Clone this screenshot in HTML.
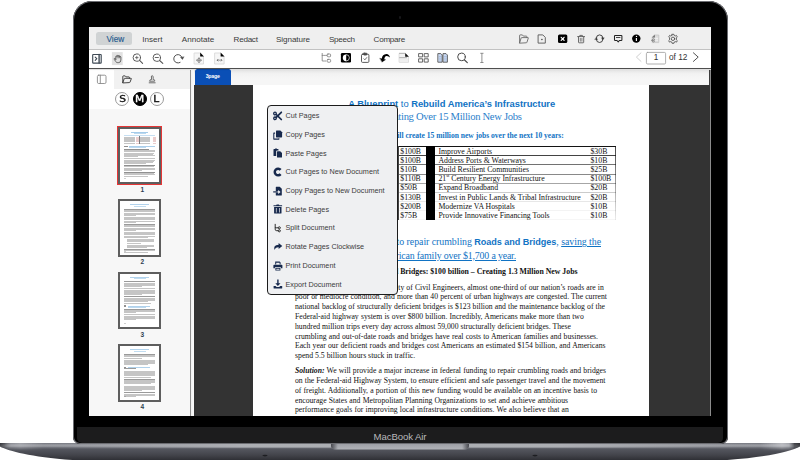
<!DOCTYPE html>
<html lang="en">
<head>
<meta charset="utf-8">
<title>PDF Viewer on MacBook Air</title>
<style>
*{box-sizing:border-box;margin:0;padding:0}
html,body{width:800px;height:460px;overflow:hidden;background:#fff}
body{position:relative;font-family:"Liberation Sans",sans-serif;color:#333}
.abs{position:absolute}
/* device */
#lid{position:absolute;left:72.6px;top:0.6px;width:655.2px;height:443px;background:#000;border-radius:19px 19px 7px 7px;box-shadow:inset 0 0 0 1px #6c6d72}
#chin{position:absolute;left:76.6px;top:427.2px;width:646.8px;height:16px;background:#1c1c1d;border-radius:0 0 5px 5px}
#brand{position:absolute;left:300px;width:200px;top:431.2px;text-align:center;font-size:9.6px;line-height:12px;color:#b9b9bc;letter-spacing:-0.08px}
#base{position:absolute;left:0;top:0}
#screen{position:absolute;left:89px;top:27px;width:622px;height:388.8px;background:#fff;overflow:hidden}
/* app */
#menubar{position:absolute;left:0;top:0;width:622px;height:22px;background:#efefef}
#menuline{position:absolute;left:0;top:21.8px;width:622px;height:1.5px;background:linear-gradient(#d6d6d6,#c2c2c2 50%,#d0d0d0)}
#toolbar{position:absolute;left:0;top:23.3px;width:622px;height:17.9px;background:#fff}
#toolline{position:absolute;left:0;top:41px;width:622px;height:1.25px;background:#4e4e4e;box-shadow:0 0.6px 0.8px rgba(0,0,0,.25);z-index:4}
.mi{position:absolute;top:6.5px;font-size:8.1px;line-height:11px;color:#3a3a3a;white-space:nowrap}
#viewbtn{position:absolute;left:7px;top:5px;width:36px;height:12.6px;border-radius:2.5px;background:#d0d3d4}
/* sidebar */
#sidebar{position:absolute;left:0;top:42.6px;width:100.5px;height:347px;background:#f7f7f7}
#sbtabs{position:absolute;left:0;top:0;width:100.5px;height:19.6px;background:#f1f1f1}
#sbtab1{position:absolute;left:0;top:0;width:25.4px;height:19.6px;background:#fff}
#sml{position:absolute;left:0;top:19.6px;width:100.5px;height:20.1px;background:#fff}
.circ{position:absolute;top:2.4px;width:14px;height:14px;border-radius:50%;border:0.8px solid #9a9a9a;background:#fff;color:#111;font-family:"DejaVu Sans","Liberation Sans",sans-serif;font-weight:bold;font-size:8.2px;line-height:12.8px;text-align:center}
.circ b{display:inline-block;transform:scaleX(1.3);font-weight:normal;-webkit-text-stroke:0.3px currentColor}
.circ.on{background:#000;border-color:#000;color:#fff}
.thumb{position:absolute;left:29.5px;width:42.6px;height:57.2px;background:#fff;border:2px solid #5e5e5e}
.thumb.sel{outline:1.6px solid #e63636}
.tl{position:absolute;width:43px;left:29.5px;text-align:center;font-size:6.5px;line-height:8px;color:#2d3e50;font-weight:bold}
#divider{position:absolute;left:100.8px;top:42.6px;width:4px;height:347px;background:linear-gradient(90deg,#8e8e8e 0,#8e8e8e 24%,#f2f2f2 24%,#fafafa 100%)}
/* viewer */
#viewer{position:absolute;left:104.8px;top:42.6px;width:517.2px;height:347px;background:#333}
#tabbar{position:absolute;left:0;top:0;width:517.2px;height:15px;background:linear-gradient(#e4e4e4,#f2f2f2 25%,#f6f6f6 60%,#f6f6f6)}
#doctab{position:absolute;left:1px;top:-0.5px;width:35.8px;height:15.5px;background:#0a4fb6;border-radius:2.5px 2.5px 0 0;color:#fff;font-size:5.2px;font-weight:bold;line-height:15px;text-align:center;letter-spacing:-0.2px}
#page{position:absolute;left:59px;top:15px;width:396.5px;height:332px;background:#fff;overflow:hidden;font-family:"Liberation Serif",serif;color:#111}
#vscroll{position:absolute;right:0.6px;top:0;width:1.6px;height:15px;background:#3c3c3c}
#redge{position:absolute;right:0;top:0;width:0.7px;height:347px;background:#8c8c8c}
.ln{position:absolute;white-space:nowrap}
.ln.bl{color:#1173c4}
.ln.tt{color:#1173c4;font-family:"Liberation Sans",sans-serif}
.ln.tb{color:#111}
.ln sup{font-size:60%;line-height:0;vertical-align:super}
.ln .gs{font-family:"Liberation Sans",sans-serif;font-size:92%}
.thumb i{position:absolute;display:block}
/* context menu */
#ctx{position:absolute;z-index:10;left:178.3px;top:78.3px;width:131px;height:189.3px;background:#eff0f2;border:1.35px solid #1c1c1c;border-radius:4px}
.ci{position:absolute;left:0;width:128px;height:18.72px}
.ci span{position:absolute;left:17.2px;top:5.1px;font-size:7.25px;line-height:10px;color:#3c3c3c;white-space:nowrap}
.ci svg{position:absolute;left:5.1px;top:4.8px;width:10px;height:10px;overflow:visible}
</style>
</head>
<body>
<!-- laptop base -->
<svg id="base" width="800" height="460" viewBox="0 0 800 460">
  <defs>
    <linearGradient id="bg1" x1="0" y1="0" x2="0" y2="1">
      <stop offset="0" stop-color="#70727a"/>
      <stop offset="0.07" stop-color="#8c8e95"/>
      <stop offset="0.16" stop-color="#9b9da3"/>
      <stop offset="0.25" stop-color="#6c6e76"/>
      <stop offset="0.34" stop-color="#54565e"/>
      <stop offset="0.67" stop-color="#43444b"/>
      <stop offset="1" stop-color="#2b2c31"/>
    </linearGradient>
    <linearGradient id="bg2" x1="0" y1="0" x2="0" y2="1">
      <stop offset="0" stop-color="#989aa0"/>
      <stop offset="0.45" stop-color="#a5a7ad"/>
      <stop offset="1" stop-color="#b0b2b7"/>
    </linearGradient>
    <linearGradient id="bg3" x1="0" y1="0" x2="1" y2="0">
      <stop offset="0" stop-color="#adafb4" stop-opacity="0"/>
      <stop offset="0.08" stop-color="#adafb4" stop-opacity="0.1"/>
      <stop offset="0.3" stop-color="#adafb4" stop-opacity="0.95"/>
      <stop offset="0.7" stop-color="#adafb4" stop-opacity="0.95"/>
      <stop offset="0.92" stop-color="#adafb4" stop-opacity="0.1"/>
      <stop offset="1" stop-color="#adafb4" stop-opacity="0"/>
    </linearGradient>
    <linearGradient id="bg4" x1="0" y1="0" x2="1" y2="0">
      <stop offset="0" stop-color="#3c3d43" stop-opacity="0.9"/>
      <stop offset="0.05" stop-color="#3c3d43" stop-opacity="0"/>
      <stop offset="0.95" stop-color="#3c3d43" stop-opacity="0"/>
      <stop offset="1" stop-color="#3c3d43" stop-opacity="0.9"/>
    </linearGradient>
    <clipPath id="bclip"><path d="M0 443.1 L800 443.1 L800 446.5 C790 451.5 768 457.5 720 460.5 L720 461 L80 461 L80 460.5 C32 457.5 10 451.5 0 446.5 Z"/></clipPath>
    <linearGradient id="tipR" x1="0" y1="0" x2="1" y2="0">
      <stop offset="0" stop-color="#d4d5d9" stop-opacity="0"/>
      <stop offset="0.55" stop-color="#d4d5d9" stop-opacity="0.75"/>
      <stop offset="0.72" stop-color="#d4d5d9" stop-opacity="0.5"/>
      <stop offset="0.86" stop-color="#26272b" stop-opacity="0.7"/>
      <stop offset="1" stop-color="#26272b" stop-opacity="0.95"/>
    </linearGradient>
    <linearGradient id="tipL" x1="1" y1="0" x2="0" y2="0">
      <stop offset="0" stop-color="#c4c5ca" stop-opacity="0"/>
      <stop offset="0.55" stop-color="#c4c5ca" stop-opacity="0.55"/>
      <stop offset="0.75" stop-color="#c4c5ca" stop-opacity="0.3"/>
      <stop offset="0.9" stop-color="#26272b" stop-opacity="0.5"/>
      <stop offset="1" stop-color="#26272b" stop-opacity="0.9"/>
    </linearGradient>
    <linearGradient id="tipV" x1="0" y1="0" x2="0" y2="1">
      <stop offset="0" stop-color="#fff" stop-opacity="1"/>
      <stop offset="0.45" stop-color="#fff" stop-opacity="0.8"/>
      <stop offset="1" stop-color="#fff" stop-opacity="0"/>
    </linearGradient>
    <mask id="tipM"><rect x="0" y="442" width="800" height="9" fill="url(#tipV)"/></mask>
  </defs>
  <path d="M0 443.1 L800 443.1 L800 446.5 C790 451.5 768 457.5 720 460.5 L720 461 L80 461 L80 460.5 C32 457.5 10 451.5 0 446.5 Z" fill="url(#bg1)"/>
  <rect x="0" y="443.1" width="800" height="4.5" fill="url(#bg3)"/>
  <g clip-path="url(#bclip)" mask="url(#tipM)"><rect x="760" y="442" width="40" height="10" fill="url(#tipR)"/><rect x="0" y="442" width="44" height="10" fill="url(#tipL)"/></g>
  <ellipse cx="265" cy="455.6" rx="2.6" ry="0.8" fill="#1d1e22"/><ellipse cx="535" cy="455.6" rx="2.6" ry="0.8" fill="#1d1e22"/>
  <path d="M331 443.1 L469 443.1 L469 446 Q469 449.5 464 449.5 L336 449.5 Q331 449.5 331 446 Z" fill="url(#bg2)"/>
  <path d="M331 443.1 L469 443.1 L469 446 Q469 449.5 464 449.5 L336 449.5 Q331 449.5 331 446 Z" fill="url(#bg4)"/>
</svg>
<div id="lid"></div>
<div id="chin"></div>
<div class="abs" style="left:398.6px;top:16.2px;width:2.8px;height:2.8px;border-radius:50%;background:#17171a"></div>
<div id="brand">MacBook Air</div>

<div id="screen">
  <div id="menubar">
    <div id="viewbtn"></div>
    <div class="mi" style="left:17.5px;color:#275a8f;font-size:8.25px;-webkit-text-stroke:0.15px #275a8f">View</div>
    <div class="mi" style="left:53.3px">Insert</div>
    <div class="mi" style="left:92.8px">Annotate</div>
    <div class="mi" style="left:144.6px;letter-spacing:-0.27px">Redact</div>
    <div class="mi" style="left:187px;letter-spacing:-0.08px">Signature</div>
    <div class="mi" style="left:240px;letter-spacing:-0.28px">Speech</div>
    <div class="mi" style="left:284.6px;letter-spacing:-0.27px">Compare</div>
  </div>
  <div id="menuline"></div>
  <div id="toolbar"></div>
<svg class="abs" style="left:0;top:0;overflow:visible;z-index:5" width="622" height="70" viewBox="89 27 622 70" fill="none" stroke-linecap="round" stroke-linejoin="round">
  <!-- ===== toolbar (row 2) left ===== -->
  <!-- panel toggle -->
  <g stroke="#3f4a55" stroke-width="1.15">
    <rect x="92.7" y="54.5" width="8.5" height="8.6" rx="0.6"/>
    <path d="M99.1 54.5V63.1" stroke-width="1.4"/>
    <path d="M95.2 57.1L96.8 58.7L95.2 60.3" stroke-width="1.1"/>
  </g>
  <!-- hand -->
  <rect x="111.9" y="52.1" width="10.8" height="13" fill="#e1e1e1" stroke="none"/>
  <path d="M115.8 59.4V56.5Q115.8 55.9 116.45 55.9Q117.1 55.9 117.1 56.5V56Q117.1 55.4 117.75 55.4Q118.4 55.4 118.4 56V56.2Q118.4 55.6 119.05 55.6Q119.7 55.6 119.7 56.2V57.2Q119.7 56.6 120.3 56.6Q120.9 56.6 120.9 57.2V60Q120.9 62.7 118.3 62.7H117.8Q116.5 62.7 115.7 61.5L114.3 59.4Q113.9 58.7 114.5 58.4Q115.1 58.2 115.5 58.8Z" stroke="#3a3a3a" stroke-width="0.72"/>
  <path d="M117.1 56.6V57.9M118.4 56.2V57.9M119.7 56.6V57.9" stroke="#333" stroke-width="0.45"/>
  <!-- zoom in -->
  <g stroke="#555" stroke-width="0.95">
    <circle cx="136.8" cy="57.6" r="3.7"/>
    <path d="M139.6 60.4L142.6 63.3" stroke-width="1.1"/>
    <path d="M135.5 57.6H138.1M136.8 56.3V58.9" stroke-width="0.8"/>
  </g>
  <!-- zoom out -->
  <g stroke="#555" stroke-width="0.95">
    <circle cx="156.8" cy="57.7" r="3.7"/>
    <path d="M159.6 60.5L162.8 63.4" stroke-width="1.1"/>
    <path d="M155.2 57.5H158.4" stroke-width="0.9"/>
  </g>
  <!-- rotate -->
  <g stroke="#444" stroke-width="0.95">
    <path d="M182.06 57.7A4.2 4.2 0 1 0 180.1 62.44"/>
    <path d="M180.6 57.5L182.5 59.5L183.9 57Z" fill="#444" stroke-width="0.4"/>
  </g>
  <!-- page fit -->
  <g>
    <path d="M194.5 53H200.2L203.5 56.3V64H194.5Z" fill="#f6f6f6" stroke="#d9d9d9" stroke-width="0.9"/>
    <path d="M200.2 52.6L203.9 56.4H200.2Z" fill="#000" stroke="none"/>
    <path d="M199 58V62.4M196.8 60.2H201.2" stroke="#666" stroke-width="0.7" stroke-dasharray="1 0.7"/>
    <path d="M198.3 58.6L199 57.8L199.7 58.6M198.3 61.8L199 62.6L199.7 61.8M197.4 59.5L196.6 60.2L197.4 60.9M200.6 59.5L201.4 60.2L200.6 60.9" stroke="#555" stroke-width="0.6"/>
  </g>
  <!-- page width -->
  <g>
    <path d="M215 53H220.8L224.1 56.3V64H215Z" fill="#f6f6f6" stroke="#d9d9d9" stroke-width="0.9"/>
    <path d="M220.6 52.6L224.5 56.4H220.6Z" fill="#000" stroke="none"/>
    <path d="M217.3 60.2H221.9" stroke="#777" stroke-width="0.7" stroke-dasharray="0.8 0.8"/>
    <path d="M218 59.4L217.2 60.2L218 61M221.2 59.4L222 60.2L221.2 61" stroke="#444" stroke-width="0.7"/>
  </g>

  <!-- ===== toolbar middle ===== -->
  <!-- tree -->
  <g stroke="#7a7a7a" stroke-width="0.8">
    <path d="M322.2 53.4V61H326.6M322.2 55.4H326.6" stroke-dasharray="1.2 0.8"/>
    <rect x="327.2" y="54" width="3.4" height="2.8" rx="0.8"/>
    <rect x="327.2" y="59.4" width="3.4" height="2.8" rx="0.8"/>
  </g>
  <!-- contrast -->
  <rect x="340.9" y="53" width="10.1" height="9.6" rx="1.3" fill="#000" stroke="none"/>
  <path d="M346.2 54.4A3.4 3.4 0 0 0 346.2 61.2Z" fill="#fff" stroke="none"/>
  <path d="M346.2 54.6A3.2 3.2 0 0 1 346.2 61" stroke="#fff" stroke-width="0.7"/>
  <!-- clipboard -->
  <g stroke="#4a4a4a" stroke-width="0.9">
    <rect x="361.5" y="54.2" width="7.4" height="8.2" rx="1"/>
    <rect x="363.6" y="53.2" width="3.2" height="1.8" rx="0.5" fill="#4a4a4a"/>
    <path d="M363.9 58.8L364.9 59.8L366.7 57.6" stroke-width="0.8"/>
  </g>
  <!-- undo -->
  <path d="M381.7 58.9Q382.3 54.3 386.4 54Q389.2 54 390 57.6Q388.4 55.7 386.6 55.9Q384.5 56.2 384.2 59.7Z" fill="#000" stroke="none"/>
  <path d="M380 58.3L385.6 59.7L382.1 62Z" fill="#000" stroke="#000" stroke-width="0.3"/>
  <!-- page (faint) -->
  <g>
    <path d="M399.5 53.5H405.4L408.5 56.6V62.3H399.5Z" fill="#f4f4f4" stroke="#dadada" stroke-width="0.9"/>
    <path d="M405.2 53L408.9 56.8H405.2Z" fill="#111" stroke="none"/>
    <path d="M399.6 57.7H406.6" stroke="#9a9a9a" stroke-width="0.8"/><path d="M399.4 53.3H405" stroke="#a0a0a0" stroke-width="0.7"/><path d="M400 60H408.2" stroke="#e4e4e4" stroke-width="0.7"/>
  </g>
  <!-- grid -->
  <g stroke="#555" stroke-width="0.9">
    <rect x="419" y="53.6" width="3.6" height="3.3"/><rect x="424.6" y="53.6" width="3.6" height="3.3"/>
    <rect x="419" y="58.8" width="3.6" height="3.3"/><rect x="424.6" y="58.8" width="3.6" height="3.3"/>
  </g>
  <!-- columns -->
  <g stroke="#444" stroke-width="0.8" fill="#c9d9f2">
    <path d="M438.2 53.6H440.8L442.2 55V62.2H438.2Z"/>
    <path d="M443.4 53.6H446L447.4 55V62.2H443.4Z"/>
    <path d="M439.2 56.5H441.2M439.2 58.2H441.2M439.2 59.9H441.2M444.4 56.5H446.4M444.4 58.2H446.4M444.4 59.9H446.4" stroke="#8fa6cc" stroke-width="0.5"/>
  </g>
  <!-- search -->
  <g stroke="#4a4a4a" stroke-width="1">
    <circle cx="461.5" cy="56.9" r="3.8"/>
    <path d="M464.3 59.8L467.3 62.6" stroke-width="1.2"/>
  </g>
  <!-- text cursor -->
  <path d="M481.9 53.6V62.2M480.7 53.3H483.1M480.7 62.5H483.1" stroke="#7c7c7c" stroke-width="0.85"/>

  <!-- ===== pager ===== -->
  <path d="M641 52.8L636.4 57.1L641 61.4" stroke="#c9c9c9" stroke-width="0.9"/>
  <rect x="646.4" y="52.4" width="19.2" height="11.6" rx="1.2" fill="#fff" stroke="#9b9b9b" stroke-width="0.8"/>
  <path d="M693.4 52.8L698.2 57.1L693.4 61.4" stroke="#4a4a4a" stroke-width="0.95"/>

  <!-- ===== menu bar right icons ===== -->
  <!-- folder -->
  <path d="M519.6 42.8V35.4Q519.6 34.9 520.1 34.9H522.4L523.4 36.1H526.3Q526.8 36.1 526.8 36.6V37.6M519.6 42.8L521.2 37.9Q521.3 37.6 521.7 37.6H528Q528.5 37.6 528.3 38.1L526.9 42.4Q526.8 42.8 526.4 42.8Z" stroke="#6a6a6a" stroke-width="0.9"/>
  <!-- new file -->
  <path d="M538.5 34.9H542.8L545.3 37.4V43.1H538.5Z" stroke="#5e5e5e" stroke-width="0.95"/>
  <circle cx="541.9" cy="39.5" r="0.8" fill="#444" stroke="none"/>
  <!-- X box -->
  <rect x="558" y="34.5" width="9.3" height="8.6" rx="1.5" fill="#000" stroke="none"/>
  <path d="M561.2 37.3L564.1 40.3M564.1 37.3L561.2 40.3" stroke="#fff" stroke-width="1.2"/>
  <!-- trash -->
  <g stroke="#555" stroke-width="0.85">
    <path d="M577.6 36.6H584.6M579.8 36.4V35.4H582.4V36.4M578.5 36.8V42.2Q578.5 42.8 579.1 42.8H583.1Q583.7 42.8 583.7 42.2V36.8"/>
    <path d="M580.3 38.4V41.2M581.9 38.4V41.2" stroke-width="0.7"/>
  </g>
  <!-- sync -->
  <g stroke="#333" stroke-width="0.95">
    <path d="M596.3 38.2A3.3 3.3 0 0 1 602.9 38.2M602.9 39.2A3.3 3.3 0 0 1 596.3 39.2" stroke-width="0.9"/>
    <path d="M601.5 37.8H604.3L602.9 39.7Z M594.9 39.6H597.7L596.3 37.7Z" fill="#333" stroke-width="0.3"/>
  </g>
  <!-- comment -->
  <g stroke="#333" stroke-width="0.9">
    <path d="M615.2 35.4H621.2Q621.9 35.4 621.9 36.1V39.8Q621.9 40.5 621.2 40.5H619.4L618.2 41.9L617 40.5H615.2Q614.5 40.5 614.5 39.8V36.1Q614.5 35.4 615.2 35.4Z" stroke-width="1.05" stroke="#222"/>
    <path d="M616.4 37.5H620" stroke-width="0.9"/>
  </g>
  <!-- info -->
  <circle cx="636.3" cy="38.6" r="4.2" fill="#000" stroke="none"/>
  <path d="M636.4 38.1V41" stroke="#fff" stroke-width="1.15" stroke-linecap="butt"/>
  <circle cx="636.5" cy="36.4" r="0.7" fill="#fff" stroke="none"/>
  <!-- file e (faint) -->
  <g>
    <path d="M654.6 35H658.8V42.6H652.2V37.3Z" fill="#dcdcdc" stroke="#c2c2c2" stroke-width="0.7"/>
    <path d="M654.9 34.7V37.6H651.9Z" fill="#6e6e6e" stroke="none"/>
    <path d="M655.6 38.3H657.6M655.6 40.2H657.6" stroke="#fff" stroke-width="0.7"/>
    <path d="M654.6 39.4A1.5 1.5 0 1 0 654.6 41.4M651.9 40.4H654" stroke="#7a7a7a" stroke-width="0.8" fill="none"/>
  </g>
  <!-- gear -->
  <g stroke="#4a4a4a" stroke-width="0.85">
    <circle cx="673" cy="38.8" r="1.7"/>
    <path d="M672.1 34.3H673.9L674.2 35.5L675.3 36L676.4 35.4L677.3 36.9L676.4 37.8V39.8L677.3 40.7L676.4 42.2L675.3 41.6L674.2 42.1L673.9 43.3H672.1L671.8 42.1L670.7 41.6L669.6 42.2L668.7 40.7L669.6 39.8V37.8L668.7 36.9L669.6 35.4L670.7 36L671.8 35.5Z"/>
  </g>

  <!-- ===== sidebar tab icons ===== -->
  <g stroke="#8a8a8a" stroke-width="0.9">
    <rect x="97.4" y="75.2" width="8.6" height="8.3" rx="1.3"/>
    <path d="M100.3 75.2V83.5"/>
  </g>
  <path d="M122.8 82.6V76.4Q122.8 75.9 123.3 75.9H125.2L126.1 76.9H128.9Q129.4 76.9 129.4 77.4V78.3M122.8 82.6L124.3 78.6Q124.4 78.3 124.8 78.3H130.9Q131.5 78.3 131.3 78.8L130 82.2Q129.9 82.6 129.5 82.6Z" stroke="#333" stroke-width="0.9"/>
  <g stroke="#555" stroke-width="0.85">
    <path d="M149.2 82.8H155.2"/>
    <path d="M149.8 81.2H154.6V80.2Q154.6 79.6 153.6 79.6L153 79.5Q153.4 78.3 153.1 76.7Q152.9 75.6 152.1 75.6Q151.3 75.7 151.4 76.9L151.6 79.5L150.8 79.6Q149.8 79.6 149.8 80.2Z"/>
  </g>
</svg>
<div class="abs" style="z-index:6;left:557.4px;top:25.3px;width:19.2px;height:11.6px;font-size:8.2px;line-height:11.6px;text-align:center;color:#333">1</div>
<div class="abs" style="z-index:6;left:580px;top:25.3px;font-size:8.3px;line-height:11.6px;color:#333;white-space:nowrap">of 12</div>

  <div id="toolline"></div>

  <div id="sidebar">
    <div id="sbtabs"><div id="sbtab1"></div></div>
    <div id="sml">
      <div class="circ" style="left:26.4px"><b>S</b></div>
      <div class="circ on" style="left:43.5px"><b>M</b></div>
      <div class="circ" style="left:60.5px"><b>L</b></div>
    </div>
    <div class="thumb sel" style="left:29.2px;top:57.3px"><i style="left:11px;top:3.00px;width:17px;height:0.9px;background:#4a97d4;opacity:0.5"></i><i style="left:13.5px;top:4.60px;width:12px;height:0.8px;background:#4a97d4;opacity:0.37"></i><i style="left:4px;top:6.60px;width:31px;height:0.7px;background:#4a97d4;opacity:0.31"></i><i style="left:4px;top:8.00px;width:11px;height:0.7px;background:#555;opacity:0.34"></i><i style="left:15.6px;top:8.00px;width:3px;height:0.7px;background:#a33;opacity:0.25"></i><i style="left:20.2px;top:8.00px;width:10px;height:0.7px;background:#555;opacity:0.34"></i><i style="left:33px;top:8.00px;width:2.4px;height:0.7px;background:#a33;opacity:0.25"></i><i style="left:4px;top:9.15px;width:11px;height:0.7px;background:#555;opacity:0.34"></i><i style="left:15.6px;top:9.15px;width:3px;height:0.7px;background:#a33;opacity:0.25"></i><i style="left:20.2px;top:9.15px;width:10px;height:0.7px;background:#555;opacity:0.34"></i><i style="left:33px;top:9.15px;width:2.4px;height:0.7px;background:#a33;opacity:0.25"></i><i style="left:4px;top:10.30px;width:11px;height:0.7px;background:#555;opacity:0.34"></i><i style="left:15.6px;top:10.30px;width:3px;height:0.7px;background:#a33;opacity:0.25"></i><i style="left:20.2px;top:10.30px;width:10px;height:0.7px;background:#555;opacity:0.34"></i><i style="left:33px;top:10.30px;width:2.4px;height:0.7px;background:#a33;opacity:0.25"></i><i style="left:4px;top:11.45px;width:11px;height:0.7px;background:#555;opacity:0.34"></i><i style="left:15.6px;top:11.45px;width:3px;height:0.7px;background:#a33;opacity:0.25"></i><i style="left:20.2px;top:11.45px;width:10px;height:0.7px;background:#555;opacity:0.34"></i><i style="left:33px;top:11.45px;width:2.4px;height:0.7px;background:#a33;opacity:0.25"></i><i style="left:4px;top:12.60px;width:11px;height:0.7px;background:#555;opacity:0.34"></i><i style="left:15.6px;top:12.60px;width:3px;height:0.7px;background:#a33;opacity:0.25"></i><i style="left:20.2px;top:12.60px;width:10px;height:0.7px;background:#555;opacity:0.34"></i><i style="left:33px;top:12.60px;width:2.4px;height:0.7px;background:#a33;opacity:0.25"></i><i style="left:4px;top:13.75px;width:11px;height:0.7px;background:#555;opacity:0.34"></i><i style="left:15.6px;top:13.75px;width:3px;height:0.7px;background:#a33;opacity:0.25"></i><i style="left:20.2px;top:13.75px;width:10px;height:0.7px;background:#555;opacity:0.34"></i><i style="left:33px;top:13.75px;width:2.4px;height:0.7px;background:#a33;opacity:0.25"></i><i style="left:18.8px;top:7.60px;width:1.1px;height:7.4px;background:#111;opacity:0.56"></i><i style="left:4px;top:17.00px;width:3.4px;height:1.6px;background:#222;opacity:0.5"></i><i style="left:8.4px;top:16.90px;width:26px;height:0.8px;background:#4a97d4;opacity:0.46"></i><i style="left:8.4px;top:18.30px;width:17px;height:0.8px;background:#4a97d4;opacity:0.37"></i><i style="left:4px;top:20.20px;width:25px;height:0.75px;background:#222;opacity:0.5"></i><i style="left:4px;top:21.40px;width:31px;height:0.75px;background:#444;opacity:0.31"></i><i style="left:4px;top:22.60px;width:31px;height:0.75px;background:#444;opacity:0.31"></i><i style="left:4px;top:23.80px;width:30px;height:0.75px;background:#444;opacity:0.31"></i><i style="left:4px;top:25.00px;width:29px;height:0.75px;background:#444;opacity:0.31"></i><i style="left:4px;top:26.20px;width:31px;height:0.75px;background:#444;opacity:0.31"></i><i style="left:4px;top:27.40px;width:14px;height:0.75px;background:#444;opacity:0.31"></i><i style="left:4px;top:29.60px;width:31px;height:0.75px;background:#444;opacity:0.31"></i><i style="left:4px;top:30.80px;width:31px;height:0.75px;background:#444;opacity:0.31"></i><i style="left:4px;top:32.00px;width:30px;height:0.75px;background:#444;opacity:0.31"></i><i style="left:4px;top:33.20px;width:29px;height:0.75px;background:#444;opacity:0.31"></i><i style="left:4px;top:34.40px;width:22px;height:0.75px;background:#444;opacity:0.31"></i><i style="left:4px;top:36.40px;width:31px;height:0.75px;background:#222;opacity:0.5"></i><i style="left:4px;top:37.60px;width:30px;height:0.75px;background:#444;opacity:0.31"></i><i style="left:4px;top:38.80px;width:31px;height:0.75px;background:#444;opacity:0.31"></i><i style="left:4px;top:40.00px;width:31px;height:0.75px;background:#444;opacity:0.31"></i><i style="left:4px;top:41.20px;width:18px;height:0.75px;background:#444;opacity:0.31"></i><i style="left:4px;top:43.20px;width:31px;height:0.75px;background:#222;opacity:0.5"></i><i style="left:4px;top:44.40px;width:30px;height:0.75px;background:#444;opacity:0.31"></i><i style="left:4px;top:45.60px;width:31px;height:0.75px;background:#444;opacity:0.31"></i><i style="left:4px;top:46.80px;width:24px;height:0.75px;background:#444;opacity:0.31"></i><i style="left:4px;top:49.40px;width:1.5px;height:0.7px;background:#666;opacity:0.31"></i></div><div class="tl" style="left:31.8px;top:116.2px">1</div>
    <div class="thumb" style="left:29.2px;top:129.8px"><i style="left:10px;top:3.00px;width:19px;height:0.9px;background:#4a97d4;opacity:0.43"></i><i style="left:13.5px;top:4.60px;width:12px;height:0.8px;background:#4a97d4;opacity:0.34"></i><i style="left:4px;top:7.60px;width:31px;height:0.75px;background:#222;opacity:0.46"></i><i style="left:4px;top:8.80px;width:31px;height:0.75px;background:#444;opacity:0.31"></i><i style="left:4px;top:10.00px;width:31px;height:0.75px;background:#444;opacity:0.31"></i><i style="left:4px;top:11.20px;width:31px;height:0.75px;background:#444;opacity:0.31"></i><i style="left:4px;top:12.40px;width:31px;height:0.75px;background:#444;opacity:0.31"></i><i style="left:4px;top:13.60px;width:12px;height:0.75px;background:#444;opacity:0.31"></i><i style="left:4px;top:15.70px;width:31px;height:0.75px;background:#444;opacity:0.31"></i><i style="left:4px;top:16.90px;width:31px;height:0.75px;background:#444;opacity:0.31"></i><i style="left:4px;top:18.10px;width:31px;height:0.75px;background:#444;opacity:0.31"></i><i style="left:4px;top:19.30px;width:31px;height:0.75px;background:#444;opacity:0.31"></i><i style="left:4px;top:20.50px;width:12px;height:0.75px;background:#444;opacity:0.31"></i><i style="left:4px;top:22.60px;width:31px;height:0.75px;background:#222;opacity:0.46"></i><i style="left:4px;top:23.80px;width:31px;height:0.75px;background:#444;opacity:0.31"></i><i style="left:4px;top:25.00px;width:31px;height:0.75px;background:#444;opacity:0.31"></i><i style="left:4px;top:26.20px;width:31px;height:0.75px;background:#444;opacity:0.31"></i><i style="left:4px;top:27.40px;width:31px;height:0.75px;background:#444;opacity:0.31"></i><i style="left:4px;top:28.60px;width:12px;height:0.75px;background:#444;opacity:0.31"></i><i style="left:4px;top:30.70px;width:31px;height:0.75px;background:#444;opacity:0.31"></i><i style="left:4px;top:31.90px;width:31px;height:0.75px;background:#444;opacity:0.31"></i><i style="left:4px;top:33.10px;width:31px;height:0.75px;background:#444;opacity:0.31"></i><i style="left:4px;top:34.30px;width:31px;height:0.75px;background:#444;opacity:0.31"></i><i style="left:4px;top:35.50px;width:24px;height:0.75px;background:#444;opacity:0.31"></i><i style="left:7px;top:37.60px;width:27px;height:0.75px;background:#444;opacity:0.31"></i><i style="left:7px;top:38.80px;width:27px;height:0.75px;background:#444;opacity:0.31"></i><i style="left:7px;top:40.00px;width:27px;height:0.75px;background:#444;opacity:0.31"></i><i style="left:7px;top:41.20px;width:14px;height:0.75px;background:#444;opacity:0.31"></i><i style="left:7px;top:43.30px;width:27px;height:0.75px;background:#444;opacity:0.31"></i><i style="left:7px;top:44.50px;width:27px;height:0.75px;background:#444;opacity:0.31"></i><i style="left:7px;top:45.70px;width:20px;height:0.75px;background:#444;opacity:0.31"></i><i style="left:4px;top:47.80px;width:31px;height:0.75px;background:#222;opacity:0.46"></i><i style="left:4px;top:49.00px;width:31px;height:0.75px;background:#444;opacity:0.31"></i><i style="left:4px;top:50.20px;width:24px;height:0.75px;background:#444;opacity:0.31"></i><i style="left:4px;top:49.40px;width:1.5px;height:0.7px;background:#666;opacity:0.31"></i></div><div class="tl" style="left:31.8px;top:188.7px">2</div>
    <div class="thumb" style="left:29.2px;top:202.3px"><i style="left:10px;top:3.00px;width:19px;height:0.9px;background:#4a97d4;opacity:0.43"></i><i style="left:13.5px;top:4.60px;width:12px;height:0.8px;background:#4a97d4;opacity:0.34"></i><i style="left:4px;top:7.60px;width:31px;height:0.75px;background:#222;opacity:0.46"></i><i style="left:4px;top:8.80px;width:31px;height:0.75px;background:#444;opacity:0.31"></i><i style="left:4px;top:10.00px;width:31px;height:0.75px;background:#444;opacity:0.31"></i><i style="left:4px;top:11.20px;width:31px;height:0.75px;background:#444;opacity:0.31"></i><i style="left:4px;top:12.40px;width:18px;height:0.75px;background:#444;opacity:0.31"></i><i style="left:4px;top:14.50px;width:31px;height:0.75px;background:#444;opacity:0.31"></i><i style="left:4px;top:15.70px;width:31px;height:0.75px;background:#444;opacity:0.31"></i><i style="left:4px;top:16.90px;width:31px;height:0.75px;background:#444;opacity:0.31"></i><i style="left:4px;top:18.10px;width:31px;height:0.75px;background:#444;opacity:0.31"></i><i style="left:4px;top:19.30px;width:31px;height:0.75px;background:#444;opacity:0.31"></i><i style="left:4px;top:20.50px;width:18px;height:0.75px;background:#444;opacity:0.31"></i><i style="left:4px;top:22.60px;width:31px;height:0.75px;background:#222;opacity:0.46"></i><i style="left:4px;top:23.80px;width:31px;height:0.75px;background:#444;opacity:0.31"></i><i style="left:4px;top:25.00px;width:31px;height:0.75px;background:#444;opacity:0.31"></i><i style="left:4px;top:26.20px;width:31px;height:0.75px;background:#444;opacity:0.31"></i><i style="left:4px;top:27.40px;width:24px;height:0.75px;background:#444;opacity:0.31"></i><i style="left:4px;top:29.50px;width:27px;height:0.75px;background:#444;opacity:0.31"></i><i style="left:4px;top:31.60px;width:2.2px;height:1.5px;background:#222;opacity:0.5"></i><i style="left:7.6px;top:31.70px;width:22px;height:0.8px;background:#4a97d4;opacity:0.43"></i><i style="left:7.6px;top:33.10px;width:18px;height:0.8px;background:#4a97d4;opacity:0.37"></i><i style="left:4px;top:34.80px;width:31px;height:0.75px;background:#222;opacity:0.46"></i><i style="left:4px;top:36.00px;width:31px;height:0.75px;background:#444;opacity:0.31"></i><i style="left:4px;top:37.20px;width:31px;height:0.75px;background:#444;opacity:0.31"></i><i style="left:4px;top:38.40px;width:12px;height:0.75px;background:#444;opacity:0.31"></i><i style="left:4px;top:40.50px;width:31px;height:0.75px;background:#444;opacity:0.31"></i><i style="left:4px;top:41.70px;width:31px;height:0.75px;background:#444;opacity:0.31"></i><i style="left:4px;top:42.90px;width:31px;height:0.75px;background:#444;opacity:0.31"></i><i style="left:4px;top:44.10px;width:31px;height:0.75px;background:#444;opacity:0.31"></i><i style="left:4px;top:45.30px;width:12px;height:0.75px;background:#444;opacity:0.31"></i><i style="left:4px;top:49.40px;width:1.5px;height:0.7px;background:#666;opacity:0.31"></i></div><div class="tl" style="left:31.8px;top:261.2px">3</div>
    <div class="thumb" style="left:29.2px;top:274.8px"><i style="left:10px;top:3.00px;width:19px;height:0.9px;background:#4a97d4;opacity:0.43"></i><i style="left:13.5px;top:4.60px;width:12px;height:0.8px;background:#4a97d4;opacity:0.34"></i><i style="left:4px;top:7.60px;width:31px;height:0.75px;background:#222;opacity:0.46"></i><i style="left:4px;top:8.80px;width:31px;height:0.75px;background:#444;opacity:0.31"></i><i style="left:4px;top:10.00px;width:31px;height:0.75px;background:#444;opacity:0.31"></i><i style="left:4px;top:11.20px;width:18px;height:0.75px;background:#444;opacity:0.31"></i><i style="left:4px;top:13.30px;width:31px;height:0.75px;background:#444;opacity:0.31"></i><i style="left:4px;top:14.50px;width:31px;height:0.75px;background:#444;opacity:0.31"></i><i style="left:4px;top:15.70px;width:31px;height:0.75px;background:#444;opacity:0.31"></i><i style="left:4px;top:16.90px;width:31px;height:0.75px;background:#444;opacity:0.31"></i><i style="left:4px;top:18.10px;width:24px;height:0.75px;background:#444;opacity:0.31"></i><i style="left:4px;top:20.20px;width:2.2px;height:1.5px;background:#222;opacity:0.5"></i><i style="left:7.6px;top:20.30px;width:22px;height:0.8px;background:#4a97d4;opacity:0.43"></i><i style="left:4px;top:22.10px;width:12px;height:0.75px;background:#222;opacity:0.46"></i><i style="left:4px;top:24.20px;width:31px;height:0.75px;background:#444;opacity:0.31"></i><i style="left:4px;top:25.40px;width:31px;height:0.75px;background:#444;opacity:0.31"></i><i style="left:4px;top:26.60px;width:31px;height:0.75px;background:#444;opacity:0.31"></i><i style="left:4px;top:27.80px;width:31px;height:0.75px;background:#444;opacity:0.31"></i><i style="left:4px;top:29.00px;width:31px;height:0.75px;background:#444;opacity:0.31"></i><i style="left:4px;top:30.20px;width:27px;height:0.75px;background:#444;opacity:0.31"></i><i style="left:4px;top:32.30px;width:31px;height:0.75px;background:#222;opacity:0.46"></i><i style="left:4px;top:33.50px;width:31px;height:0.75px;background:#444;opacity:0.31"></i><i style="left:4px;top:34.70px;width:31px;height:0.75px;background:#444;opacity:0.31"></i><i style="left:4px;top:35.90px;width:31px;height:0.75px;background:#444;opacity:0.31"></i><i style="left:4px;top:37.10px;width:27px;height:0.75px;background:#444;opacity:0.31"></i><i style="left:4px;top:39.20px;width:31px;height:0.75px;background:#444;opacity:0.31"></i><i style="left:4px;top:40.40px;width:31px;height:0.75px;background:#444;opacity:0.31"></i><i style="left:4px;top:41.60px;width:31px;height:0.75px;background:#444;opacity:0.31"></i><i style="left:4px;top:42.80px;width:31px;height:0.75px;background:#444;opacity:0.31"></i><i style="left:4px;top:44.00px;width:18px;height:0.75px;background:#444;opacity:0.31"></i><i style="left:4px;top:46.10px;width:31px;height:0.75px;background:#222;opacity:0.46"></i><i style="left:4px;top:47.30px;width:31px;height:0.75px;background:#444;opacity:0.31"></i><i style="left:4px;top:48.50px;width:31px;height:0.75px;background:#444;opacity:0.31"></i><i style="left:4px;top:49.70px;width:12px;height:0.75px;background:#444;opacity:0.31"></i><i style="left:4px;top:49.40px;width:1.5px;height:0.7px;background:#666;opacity:0.31"></i></div><div class="tl" style="left:31.8px;top:333.7px">4</div>
  </div>
  <div id="divider"></div>

  <div id="viewer">
    <div id="tabbar"><div id="doctab">3page</div><div id="vscroll"></div></div><div id="redge"></div>
    <div id="page">
<div class="ln tt" style="top:13.86px;font-size:9.4px;line-height:11.84px;right:94.10px;letter-spacing:-0.02px;"><b>A Blueprint</b> to <b>Rebuild America’s Infrastructure</b></div>
<div class="ln bl" style="top:25.48px;font-size:10.6px;line-height:13.36px;right:127.80px;letter-spacing:-0.31px;color:#2b80cb;">Creating Over 15 Million New Jobs</div>
<div class="ln bl" style="top:46.83px;font-size:7.55px;line-height:9.51px;right:85.50px;"><b>Senate Democrats’ Blueprint will create 15 million new jobs over the next 10 years:</b></div>
<div class="abs" style="left:33.6px;top:61.90px;width:329.2px;height:73.36px;border-left:0.8px solid #222"></div>
<div class="abs" style="left:362.0px;top:61.90px;width:0.8px;height:73.36px;background:linear-gradient(#444,#999 50%,rgba(160,160,160,.2))"></div>
<div class="abs" style="left:33.6px;top:61.50px;width:329.2px;height:0.8px;background:rgba(20,20,20,1)"></div>
<div class="abs" style="left:33.6px;top:70.67px;width:329.2px;height:0.8px;background:rgba(20,20,20,0.8)"></div>
<div class="abs" style="left:33.6px;top:79.84px;width:329.2px;height:0.8px;background:rgba(20,20,20,0.6)"></div>
<div class="abs" style="left:33.6px;top:89.01px;width:329.2px;height:0.8px;background:rgba(20,20,20,0.5)"></div>
<div class="abs" style="left:33.6px;top:98.18px;width:329.2px;height:0.8px;background:rgba(20,20,20,0.38)"></div>
<div class="abs" style="left:33.6px;top:107.35px;width:329.2px;height:0.8px;background:rgba(20,20,20,0.22)"></div>
<div class="abs" style="left:33.6px;top:116.52px;width:329.2px;height:0.8px;background:rgba(20,20,20,0.1)"></div>
<div class="abs" style="left:33.6px;top:125.69px;width:329.2px;height:0.8px;background:rgba(20,20,20,0.05)"></div>
<div class="abs" style="left:33.6px;top:134.86px;width:329.2px;height:0.8px;background:rgba(20,20,20,0.04)"></div>
<div class="abs" style="left:173.2px;top:61.90px;width:8.7px;height:73.36px;background:#000"></div>
<div class="abs" style="left:144.8px;top:61.90px;width:0.7px;height:73.36px;background:#444"></div>
<div class="ln tb" style="top:62.17px;font-size:7.77px;line-height:9.79px;left:35.70px;width:108px;overflow:hidden;">Repair Crumbling Roads &amp; Bridges</div>
<div class="ln tb" style="top:62.17px;font-size:7.77px;line-height:9.79px;left:147.50px;">$100B</div>
<div class="ln tb" style="top:62.17px;font-size:7.77px;line-height:9.79px;left:185.60px;">Improve Airports</div>
<div class="ln tb" style="top:62.17px;font-size:7.77px;line-height:9.79px;left:337.70px;">$30B</div>
<div class="ln tb" style="top:71.34px;font-size:7.77px;line-height:9.79px;left:35.70px;width:108px;overflow:hidden;">Revitalize Main Street</div>
<div class="ln tb" style="top:71.34px;font-size:7.77px;line-height:9.79px;left:147.50px;">$100B</div>
<div class="ln tb" style="top:71.34px;font-size:7.77px;line-height:9.79px;left:185.60px;">Address Ports &amp; Waterways</div>
<div class="ln tb" style="top:71.34px;font-size:7.77px;line-height:9.79px;left:337.70px;">$10B</div>
<div class="ln tb" style="top:80.51px;font-size:7.77px;line-height:9.79px;left:35.70px;width:108px;overflow:hidden;">Expand TIGER</div>
<div class="ln tb" style="top:80.51px;font-size:7.77px;line-height:9.79px;left:147.50px;">$10B</div>
<div class="ln tb" style="top:80.51px;font-size:7.77px;line-height:9.79px;left:185.60px;">Build Resilient Communities</div>
<div class="ln tb" style="top:80.51px;font-size:7.77px;line-height:9.79px;left:337.70px;">$25B</div>
<div class="ln tb" style="top:89.68px;font-size:7.77px;line-height:9.79px;left:35.70px;width:108px;overflow:hidden;">Rehabilitate Water and Sewer</div>
<div class="ln tb" style="top:89.68px;font-size:7.77px;line-height:9.79px;left:147.50px;">$110B</div>
<div class="ln tb" style="top:89.68px;font-size:7.77px;line-height:9.79px;left:185.60px;">21<sup>st</sup> Century Energy Infrastructure</div>
<div class="ln tb" style="top:89.68px;font-size:7.77px;line-height:9.79px;left:337.70px;">$100B</div>
<div class="ln tb" style="top:98.85px;font-size:7.77px;line-height:9.79px;left:35.70px;width:108px;overflow:hidden;">Modernize America’s Rail and Bus Systems</div>
<div class="ln tb" style="top:98.85px;font-size:7.77px;line-height:9.79px;left:147.50px;">$50B</div>
<div class="ln tb" style="top:98.85px;font-size:7.77px;line-height:9.79px;left:185.60px;">Expand Broadband</div>
<div class="ln tb" style="top:98.85px;font-size:7.77px;line-height:9.79px;left:337.70px;">$20B</div>
<div class="ln tb" style="top:108.02px;font-size:7.77px;line-height:9.79px;left:35.70px;width:108px;overflow:hidden;">Replace &amp; Expand Rail and Bus Systems</div>
<div class="ln tb" style="top:108.02px;font-size:7.77px;line-height:9.79px;left:147.50px;">$130B</div>
<div class="ln tb" style="top:108.02px;font-size:7.77px;line-height:9.79px;left:185.60px;">Invest in Public Lands &amp; Tribal Infrastructure</div>
<div class="ln tb" style="top:108.02px;font-size:7.77px;line-height:9.79px;left:337.70px;">$20B</div>
<div class="ln tb" style="top:117.19px;font-size:7.77px;line-height:9.79px;left:35.70px;width:108px;overflow:hidden;">Build New Vital Infrastructure Projects</div>
<div class="ln tb" style="top:117.19px;font-size:7.77px;line-height:9.79px;left:147.50px;">$200B</div>
<div class="ln tb" style="top:117.19px;font-size:7.77px;line-height:9.79px;left:185.60px;">Modernize VA Hospitals</div>
<div class="ln tb" style="top:117.19px;font-size:7.77px;line-height:9.79px;left:337.70px;">$10B</div>
<div class="ln tb" style="top:126.36px;font-size:7.77px;line-height:9.79px;left:35.70px;width:108px;overflow:hidden;">Rebuild Public Schools</div>
<div class="ln tb" style="top:126.36px;font-size:7.77px;line-height:9.79px;left:147.50px;">$75B</div>
<div class="ln tb" style="top:126.36px;font-size:7.77px;line-height:9.79px;left:185.60px;">Provide Innovative Financing Tools</div>
<div class="ln tb" style="top:126.36px;font-size:7.77px;line-height:9.79px;left:337.70px;">$10B</div>
<div class="ln bl" style="top:151.70px;font-size:9.9px;line-height:12.47px;right:48.30px;letter-spacing:-0.05px;">We will provide $100 billion to repair crumbling <b class="gs">Roads and Bridges</b>, <u>saving the</u></div>
<div class="ln bl" style="top:165.10px;font-size:9.9px;line-height:12.47px;right:133.30px;letter-spacing:-0.17px;"><u>average American family over $1,700 a year.</u></div>
<div class="ln" style="top:182.35px;font-size:7.79px;line-height:9.82px;right:71.80px;"><b>Repair Crumbling Roads and Bridges: $100 billion – Creating 1.3 Million New Jobs</b></div>
<div class="ln" style="top:198.12px;font-size:7.7px;line-height:9.7px;left:42.20px;width:308.75px;text-align:justify;text-align-last:justify;">According to the American Society of Civil Engineers, almost one-third of our nation’s roads are in</div>
<div class="ln" style="top:207.88px;font-size:7.7px;line-height:9.7px;left:42.20px;width:312.00px;text-align:justify;text-align-last:justify;">poor or mediocre condition, and more than 40 percent of urban highways are congested. The current</div>
<div class="ln" style="top:217.64px;font-size:7.7px;line-height:9.7px;left:42.20px;width:310.00px;text-align:justify;text-align-last:justify;">national backlog of structurally deficient bridges is $123 billion and the maintenance backlog of the</div>
<div class="ln" style="top:227.40px;font-size:7.7px;line-height:9.7px;left:42.20px;width:288.75px;text-align:justify;text-align-last:justify;">Federal-aid highway system is over $800 billion. Incredibly, Americans make more than two</div>
<div class="ln" style="top:237.16px;font-size:7.7px;line-height:9.7px;left:42.20px;width:275.00px;text-align:justify;text-align-last:justify;">hundred million trips every day across almost 59,000 structurally deficient bridges. These</div>
<div class="ln" style="top:246.92px;font-size:7.7px;line-height:9.7px;left:42.20px;width:303.00px;text-align:justify;text-align-last:justify;">crumbling and out-of-date roads and bridges have real costs to American families and businesses.</div>
<div class="ln" style="top:256.68px;font-size:7.7px;line-height:9.7px;left:42.20px;width:310.50px;text-align:justify;text-align-last:justify;">Each year our deficient roads and bridges cost Americans an estimated $154 billion, and Americans</div>
<div class="ln" style="top:266.39px;font-size:7.77px;line-height:9.79px;left:42.20px;">spend 5.5 billion hours stuck in traffic.</div>
<div class="ln" style="top:281.62px;font-size:7.7px;line-height:9.7px;left:42.20px;width:311.00px;text-align:justify;text-align-last:justify;"><b><i>Solution:</i></b> We will provide a major increase in federal funding to repair crumbling roads and bridges</div>
<div class="ln" style="top:291.40px;font-size:7.7px;line-height:9.7px;left:42.20px;width:310.50px;text-align:justify;text-align-last:justify;">on the Federal-aid Highway System, to ensure efficient and safe passenger travel and the movement</div>
<div class="ln" style="top:301.18px;font-size:7.7px;line-height:9.7px;left:42.20px;width:302.00px;text-align:justify;text-align-last:justify;">of freight. Additionally, a portion of this new funding would be available on an incentive basis to</div>
<div class="ln" style="top:310.96px;font-size:7.7px;line-height:9.7px;left:42.20px;width:273.00px;text-align:justify;text-align-last:justify;">encourage States and Metropolitan Planning Organizations to set and achieve ambitious</div>
<div class="ln" style="top:320.74px;font-size:7.7px;line-height:9.7px;left:42.20px;width:273.75px;text-align:justify;text-align-last:justify;">performance goals for improving local infrastructure conditions. We also believe that an</div>
</div>
  </div>

  <div id="ctx">
<div class="ci" style="top:-0.25px"><svg viewBox="0 0 10 10" fill="none" stroke="#17294d" stroke-linecap="round"><circle cx="2" cy="2.5" r="1.3" stroke-width="1.3"/><circle cx="2" cy="7.3" r="1.3" stroke-width="1.3"/><path d="M3.2 3.5L8.3 8.5M3.2 6.3L8.3 1.3" stroke-width="1.75"/></svg><span>Cut Pages</span></div>
<div class="ci" style="top:18.47px"><svg viewBox="0 0 10 10" fill="#17294d" stroke="none"><path d="M3.6 0.6H7.4L9.1 2.3V6.8Q9.1 7.4 8.5 7.4H3.6Q3 7.4 3 6.8V1.2Q3 0.6 3.6 0.6Z"/><path d="M2.1 3.1H0.8V9.1H5.9V8.3" fill="none" stroke="#17294d" stroke-width="1.05" stroke-linejoin="round"/></svg><span>Copy Pages</span></div>
<div class="ci" style="top:37.19px"><svg viewBox="0 0 10 10" fill="#17294d" stroke="none"><path d="M0.5 1.4Q0.5 0.9 1 0.9H2.1Q2.3 0.2 3 0.2Q3.7 0.2 3.9 0.9H5Q5.5 0.9 5.5 1.4V2.4H4.1Q3.2 2.4 3.2 3.3V7.9H1Q0.5 7.9 0.5 7.4Z"/><path d="M4.5 3.2H7.2L9 5V8.9Q9 9.4 8.5 9.4H4.5Q4 9.4 4 8.9V3.7Q4 3.2 4.5 3.2Z"/></svg><span>Paste Pages</span></div>
<div class="ci" style="top:55.91px"><svg viewBox="0 0 10 10" fill="none" stroke="#17294d"><path d="M7.6 2.9A3.3 3.3 0 1 0 7.6 7.1" stroke-width="2.5" stroke-linecap="butt"/></svg><span>Cut Pages to New Document</span></div>
<div class="ci" style="top:74.63px"><svg viewBox="0 0 10 10" fill="#17294d" stroke="none"><path d="M3.3 0.7H6.7L8.8 2.8V9Q8.8 9.5 8.3 9.5H3.3Q2.8 9.5 2.8 9V6.6H5.2V7.9L7.6 5.9L5.2 3.9V5.2H2.8V1.2Q2.8 0.7 3.3 0.7Z"/><path d="M0.2 5.3H4.6V6.5H0.2Z"/></svg><span>Copy Pages to New Document</span></div>
<div class="ci" style="top:93.35px"><svg viewBox="0 0 10 10" fill="#17294d" stroke="none"><path d="M0.5 1.2H3.2L3.6 0.5H6L6.4 1.2H9.1V2.3H0.5Z"/><path d="M1.1 3H8.5V8.9Q8.5 9.6 7.8 9.6H1.8Q1.1 9.6 1.1 8.9ZM2.9 4.1V8.4H3.6V4.1ZM6 4.1V8.4H6.7V4.1Z" fill-rule="evenodd"/></svg><span>Delete Pages</span></div>
<div class="ci" style="top:112.07px"><svg viewBox="0 0 10 10" fill="none" stroke="#222" stroke-width="0.95"><path d="M2.2 0.9V6.2Q2.2 7.7 3.7 7.7H5.2M2.2 4.2Q2.2 4.8 3.2 4.8H5.2"/><circle cx="6.3" cy="4.8" r="1.05"/><circle cx="6.3" cy="7.8" r="1.05"/></svg><span>Split Document</span></div>
<div class="ci" style="top:130.79px"><svg viewBox="0 0 10 10" fill="#17294d" stroke="none"><path d="M5.6 0.9L9.3 4L5.6 7.1V5.2Q2.2 5.1 1.6 8.1Q-0.2 3.2 5.6 2.8Z"/></svg><span>Rotate Pages Clockwise</span></div>
<div class="ci" style="top:149.51px"><svg viewBox="0 0 10 10" fill="#17294d" stroke="none"><path d="M2.2 0.6H6.6L7.6 1.6V3.4H6.6V1.7H3.2V3.4H2.2Z"/><path d="M1.1 3.7H8.7Q9.4 3.7 9.4 4.4V7.3H7.9V6.2H1.9V7.3H0.4V4.4Q0.4 3.7 1.1 3.7Z"/><path d="M2.4 6.9H7.4V9.5H2.4ZM3.3 7.7V8.7H6.5V7.7Z" fill-rule="evenodd"/></svg><span>Print Document</span></div>
<div class="ci" style="top:168.23px"><svg viewBox="0 0 10 10" fill="#17294d" stroke="none"><path d="M4.2 0.4H5.6V4.2H7.5L4.9 7L2.3 4.2H4.2Z"/><path d="M0.6 7H2.6L3.6 8H6.2L7.2 7H9.2V9.1Q9.2 9.6 8.7 9.6H1.1Q0.6 9.6 0.6 9.1Z"/></svg><span>Export Document</span></div>
</div>
</div>
</body>
</html>
